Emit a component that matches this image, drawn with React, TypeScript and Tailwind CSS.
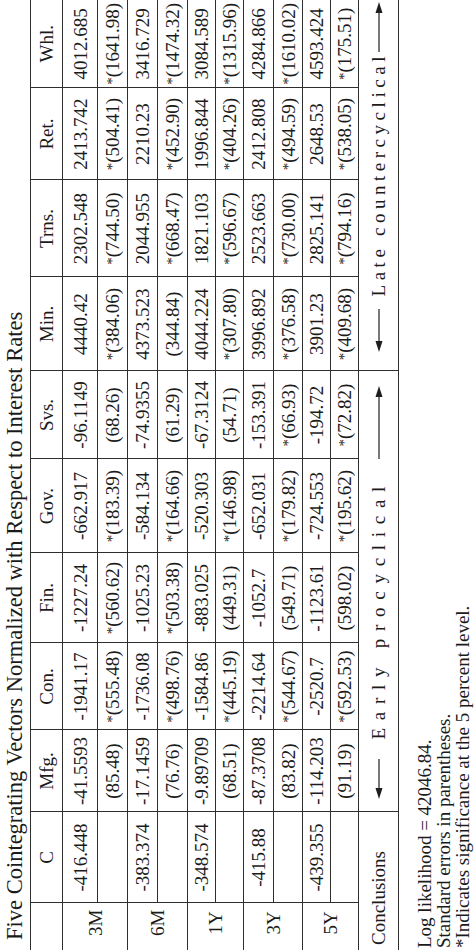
import React from "react";

const colWidths = [47, 91, 82, 87, 90, 94, 88, 94, 97, 92, 88];
const headers = ["", "C", "Mfg.", "Con.", "Fin.", "Gov.", "Svs.", "Min.", "Trns.", "Ret.", "Whl."];

// value row + standard error row for each horizon
const rows = [
  {
    label: "3M",
    c: "-416.448",
    h: [35, 30],
    vals: ["-41.5593", "-1941.17", "-1227.24", "-662.917", "-96.1149", "4440.42", "2302.548", "2413.742", "4012.685"],
    se: ["(85.48)", "*(555.48)", "*(560.62)", "*(183.39)", "(68.26)", "*(384.06)", "*(744.50)", "*(504.41)", "*(1641.98)"],
  },
  {
    label: "6M",
    c: "-383.374",
    h: [30, 30],
    vals: ["-17.1459", "-1736.08", "-1025.23", "-584.134", "-74.9355", "4373.523", "2044.955", "2210.23", "3416.729"],
    se: ["(76.76)", "*(498.76)", "*(503.38)", "*(164.66)", "(61.29)", "(344.84)", "*(668.47)", "*(452.90)", "*(1474.32)"],
  },
  {
    label: "1Y",
    c: "-348.574",
    h: [28, 28],
    vals: ["-9.89709", "-1584.86", "-883.025", "-520.303", "-67.3124", "4044.224", "1821.103", "1996.844", "3084.589"],
    se: ["(68.51)", "*(445.19)", "(449.31)", "*(146.98)", "(54.71)", "*(307.80)", "*(596.67)", "*(404.26)", "*(1315.96)"],
  },
  {
    label: "3Y",
    c: "-415.88",
    h: [30, 29],
    vals: ["-87.3708", "-2214.64", "-1052.7", "-652.031", "-153.391", "3996.892", "2523.663", "2412.808", "4284.866"],
    se: ["(83.82)", "*(544.67)", "(549.71)", "*(179.82)", "*(66.93)", "*(376.58)", "*(730.00)", "*(494.59)", "*(1610.02)"],
  },
  {
    label: "5Y",
    c: "-439.355",
    h: [28, 28],
    vals: ["-114.203", "-2520.7", "-1123.61", "-724.553", "-194.72", "3901.23", "2825.141", "2648.53", "4593.424"],
    se: ["(91.19)", "*(592.53)", "(598.02)", "*(195.62)", "*(72.82)", "*(409.68)", "*(794.16)", "*(538.05)", "*(175.51)"],
  },
];

const cell = "border border-[#2e2e2e] p-0 text-center align-middle whitespace-nowrap leading-none overflow-hidden";

function Arrow({ width, dir }: { width: number; dir: "left" | "right" }) {
  const head = dir === "left" ? `0,5 11,1.5 11,8.5` : `${width},5 ${width - 11},1.5 ${width - 11},8.5`;
  const x1 = dir === "left" ? 10 : 0;
  const x2 = dir === "left" ? width : width - 10;
  return (
    <svg width={width} height={10} viewBox={`0 0 ${width} 10`} className="shrink-0">
      <line x1={x1} y1={5} x2={x2} y2={5} stroke="#1e1e1e" strokeWidth={1.2} />
      <polygon points={head} fill="#1e1e1e" />
    </svg>
  );
}

// letter-spaced label: letters spread evenly over a fixed width
function Spread({ text, className }: { text: string; className: string }) {
  return (
    <span className={`flex justify-between shrink-0 ${className}`}>
      {text.split("").map((ch, i) =>
        ch === " " ? <span key={i} className="w-[4px]" /> : <span key={i}>{ch}</span>
      )}
    </span>
  );
}

function SE({ text }: { text: string }) {
  if (text.startsWith("*")) {
    return (
      <>
        <span className="text-[15px] relative -top-[2px]">*</span>
        {text.slice(1)}
      </>
    );
  }
  return <>{text}</>;
}

export default function App() {
  return (
    <div className="w-[474px] h-[950px] overflow-hidden bg-white">
      <div className="w-[950px] h-[474px] origin-top-left [transform:translateY(950px)_rotate(-90deg)] [font-family:'Liberation_Serif',serif] text-[#1b1b1b] bg-white">
        {/* title */}
        <div className="h-[30px] flex items-center pl-[10px] text-[22.5px] leading-none whitespace-nowrap">
          Five Cointegrating Vectors Normalized with Respect to Interest Rates
        </div>

        <table className="border-collapse text-[19px] table-fixed w-[950px]">
          <colgroup>
            {colWidths.map((w, i) => (
              <col key={i} style={{ width: w }} />
            ))}
          </colgroup>
          <tbody>
            <tr className="h-[32px]">
              {headers.map((h, i) => (
                <td key={i} className={`${cell} ${i === 0 ? "border-l-0" : ""} ${i === 10 ? "border-r-0" : ""}`}>
                  {h}
                </td>
              ))}
            </tr>
            {rows.map((r) => (
              <React.Fragment key={r.label}>
                <tr style={{ height: r.h[0] }}>
                  <td rowSpan={2} className={`${cell} border-l-0 pl-[8px]`}>
                    {r.label}
                  </td>
                  <td className={cell}>{r.c}</td>
                  {r.vals.map((v, i) => (
                    <td key={i} className={`${cell} ${i === 8 ? "border-r-0" : ""}`}>
                      {v}
                    </td>
                  ))}
                </tr>
                <tr style={{ height: r.h[1] }}>
                  <td className={cell}></td>
                  {r.se.map((v, i) => (
                    <td key={i} className={`${cell} ${i === 8 ? "border-r-0" : ""}`}>
                      <SE text={v} />
                    </td>
                  ))}
                </tr>
              </React.Fragment>
            ))}
            <tr className="h-[40px]">
              <td colSpan={2} className={`${cell} border-l-0 text-left pl-[5px]`}>
                Conclusions
              </td>
              <td colSpan={5} className={cell}>
                <div className="flex items-center pl-[12px]">
                  <Arrow width={40} dir="left" />
                  <Spread text="Early procyclical" className="ml-[20px] w-[253px]" />
                  <span className="ml-[27px] flex">
                    <Arrow width={73} dir="right" />
                  </span>
                </div>
              </td>
              <td colSpan={4} className={`${cell} border-r-0`}>
                <div className="flex items-center pl-[18px]">
                  <Arrow width={43} dir="left" />
                  <Spread text="Late countercyclical" className="ml-[13px] w-[240px]" />
                  <span className="ml-[4px] flex">
                    <Arrow width={50} dir="right" />
                  </span>
                </div>
              </td>
            </tr>
          </tbody>
        </table>

        {/* notes */}
        <div className="mt-[16px] pl-[2px] text-[19px] leading-[19px]">
          <div>Log likelihood = 42046.84.</div>
          <div>Standard errors in parentheses.</div>
          <div>*Indicates significance at the 5 percent level.</div>
        </div>
      </div>
    </div>
  );
}
